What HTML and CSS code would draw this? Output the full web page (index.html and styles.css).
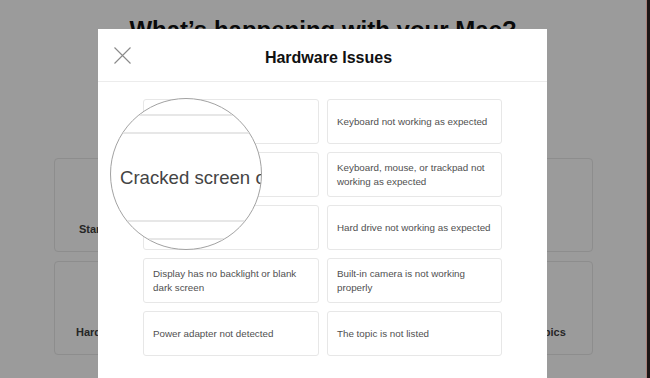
FILE: index.html
```html
<!DOCTYPE html>
<html lang="en">
<head>
<meta charset="utf-8">
<title>Hardware Issues</title>
<link rel="stylesheet" href="styles.css">
</head>
<body>
<div class="page">
  <h1 class="bg-title">What’s happening with your Mac?</h1>
  <div class="bg-grid">
    <div class="bg-card"><span>Startup &amp; Power Issues</span></div>
    <div class="bg-card"><span>Apps &amp; Software</span></div>
    <div class="bg-card"><span>Mac Basics</span></div>
    <div class="bg-card"><span>Hardware &amp; Accessories</span></div>
    <div class="bg-card"><span>Connectivity</span></div>
    <div class="bg-card"><span>Other Hardware Topics</span></div>
  </div>

  <div class="modal">
    <div class="modal-head">
      <button class="close" aria-label="Close">
        <svg width="17" height="17" viewBox="0 0 17 17"><path d="M0.5 0.5 L16.5 16.5 M16.5 0.5 L0.5 16.5" stroke="#8a8a8a" stroke-width="1.1" fill="none"/></svg>
      </button>
      <h2 class="modal-title">Hardware Issues</h2>
    </div>
    <div class="topics">
      <div class="topic"></div>
      <div class="topic">Keyboard not working as expected</div>
      <div class="topic"></div>
      <div class="topic">Keyboard, mouse, or trackpad not working as expected</div>
      <div class="topic"></div>
      <div class="topic">Hard drive not working as expected</div>
      <div class="topic">Display has no backlight or blank dark screen</div>
      <div class="topic">Built-in camera is not working properly</div>
      <div class="topic">Power adapter not detected</div>
      <div class="topic">The topic is not listed</div>
    </div>

    <div class="lens">
      <div class="lens-view">
        <div class="topic"></div>
        <div class="topic">Cracked screen or display</div>
        <div class="topic"></div>
      </div>
    </div>
  </div>
</div>
<div class="edge"></div>
</body>
</html>
```

FILE: styles.css
```css
html, body {
  margin: 0;
  padding: 0;
}
body {
  width: 650px;
  height: 378px;
  overflow: hidden;
  display: flex;
  font-family: "Liberation Sans", Arial, sans-serif;
}
.page {
  flex: 1;
  position: relative;
  background: #9b9b9b;
  overflow: hidden;
}
.edge {
  width: 3px;
  background: #1c1616;
  border-left: 1px solid #a88078;
}
.bg-title {
  margin: 18px 0 0;
  font-size: 24px;
  line-height: 24px;
  font-weight: bold;
  color: #0a0a0a;
  text-align: center;
}
.bg-grid {
  width: 539px;
  margin: 116px auto 0;
  display: grid;
  grid-template-columns: repeat(3, 1fr);
  grid-auto-rows: 94px;
  gap: 9px;
}
.bg-card {
  box-sizing: border-box;
  border: 1px solid #8d8d8d;
  border-radius: 4px;
  display: flex;
  align-items: flex-end;
  justify-content: center;
  padding-bottom: 15px;
  font-size: 11px;
  line-height: 13px;
  font-weight: bold;
  color: #262626;
  white-space: nowrap;
}
.modal {
  position: absolute;
  left: 98px;
  top: 29px;
  width: 449px;
  bottom: 0;
  background: #fff;
}
.modal-head {
  height: 53px;
  box-sizing: border-box;
  border-bottom: 1px solid #ececec;
  display: flex;
  align-items: center;
  padding: 0 21px 0 16px;
}
.close {
  width: 17px;
  height: 17px;
  padding: 0;
  border: 0;
  background: none;
  display: block;
}
.close svg {
  display: block;
}
.modal-title {
  flex: 1;
  margin: 0;
  padding-top: 6px;
  text-align: center;
  font-size: 16px;
  font-weight: bold;
  color: #111;
}
.topics {
  display: grid;
  grid-template-columns: 176px 175px;
  grid-auto-rows: 45px;
  gap: 8px;
  padding: 17px 45px 0;
}
.topic {
  box-sizing: border-box;
  border: 1px solid #e7e7e7;
  border-radius: 3px;
  display: flex;
  align-items: center;
  padding: 0 10px 0 9px;
  font-size: 9.8px;
  line-height: 14px;
  color: #505050;
}
.lens {
  position: absolute;
  left: 12px;
  top: 69px;
  width: 152px;
  height: 152px;
  box-sizing: border-box;
  border: 1px solid #a2a2a2;
  border-radius: 50%;
  background: #fff;
  overflow: hidden;
}
.lens-view {
  position: absolute;
  left: 32px;
  top: 1px;
  width: 176px;
  display: grid;
  grid-template-columns: 176px;
  grid-auto-rows: 45px;
  gap: 8px;
  transform-origin: 43px 74px;
  transform: scale(2);
}
.lens-view .topic {
  white-space: nowrap;
  font-size: 9.3px;
  color: #444;
}
```
